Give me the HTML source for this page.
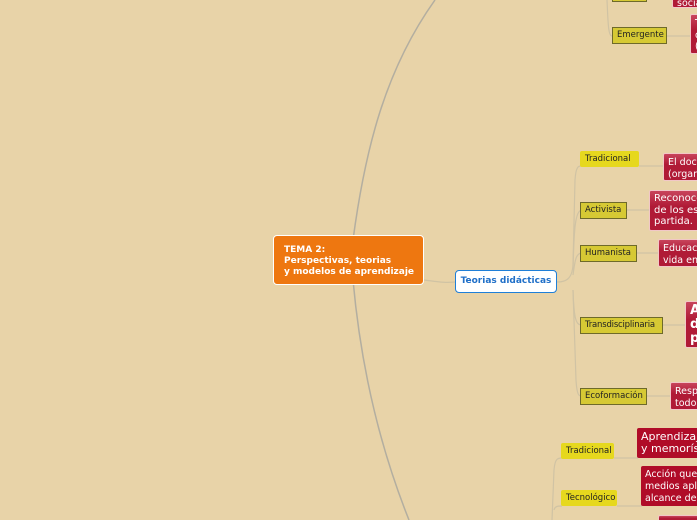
<!DOCTYPE html>
<html><head><meta charset="utf-8"><style>
*{margin:0;padding:0;box-sizing:border-box}
html,body{width:697px;height:520px;overflow:hidden}
body{background:#e8d3a8;font-family:"DejaVu Sans","Liberation Sans",sans-serif;position:relative}
.a{position:absolute;white-space:nowrap}
.y{background:#d6c934;border:1px solid #6e6a2a;font-size:8.5px;color:#222;padding:0 4px;line-height:15px}
.yb{background:#e6d81e;border:none;border-radius:2px;font-size:8.5px;color:#222;padding:0 5px;line-height:16px}
.r{background:linear-gradient(#c8445c,#b01a36 40%);color:#fff;border:1px solid #f2c7c7;border-radius:2px;font-size:9.5px;line-height:11.5px;padding:3px 4px;overflow:hidden}
.d{background:#b00c28;border:none}
</style></head><body>
<svg class="a" style="left:0;top:0" width="697" height="520">
<g fill="none" stroke="#b3aea0" stroke-width="1.5">
<path d="M353 240 C365 150 385 70 435 0"/>
<path d="M353 280 C362 380 385 460 409 520"/>
</g>
<g fill="none" stroke="#d0c3a4" stroke-width="1.2">
<path d="M424 280 C440 282 445 283 455 282"/>
<path d="M557 282 C565 282 572 280 573 265 L575 180 C576 165 579 166 582 166"/>
<path d="M573 270 C574 230 575 210 582 210"/>
<path d="M573 275 C575 260 576 253 582 253"/>
<path d="M573 290 C574 320 576 325 582 325"/>
<path d="M573 290 L576 380 C577 396 579 396 582 396"/>
<path d="M607 0 C608 20 608 36 612 36"/>
<path d="M639 166 L664 166"/><path d="M626 210 L650 210"/><path d="M636 253 L659 253"/>
<path d="M662 325 L686 325"/><path d="M646 396 L671 396"/><path d="M666 36 L690 36"/>
<path d="M614 458 L638 458"/><path d="M617 506 L642 506"/>
<path d="M552 520 L554 470 C555 458 558 458 562 458"/>
<path d="M554 510 C555 506 558 506 562 506"/>
</g></svg>
<div class="a" style="left:273px;top:235px;width:151px;height:50px;background:#ee7710;border:1.5px solid #fff;border-radius:4px;color:#fff;font-weight:bold;font-size:9px;line-height:11px;padding:9px 10px">TEMA 2:<br>Perspectivas, teorias<br>y modelos de aprendizaje</div>
<div class="a" style="left:455px;top:270px;width:102px;height:23px;background:#fff;border:1.5px solid #1f7fd8;border-radius:4px;color:#1f6fc8;font-weight:bold;font-size:9px;line-height:20px;text-align:center">Teorias didácticas</div>
<div class="a y" style="left:612px;top:-12px;width:35px;height:14px"></div>
<div class="a y" style="left:612px;top:27px;width:55px">Emergente</div>
<div class="a yb" style="left:580px;top:151px;width:59px">Tradicional</div>
<div class="a y" style="left:580px;top:202px;width:47px">Activista</div>
<div class="a y" style="left:580px;top:245px;width:57px">Humanista</div>
<div class="a y" style="left:580px;top:317px;width:83px;letter-spacing:-0.2px">Transdisciplinaria</div>
<div class="a y" style="left:580px;top:388px;width:67px">Ecoformación</div>
<div class="a yb" style="left:561px;top:443px;width:53px">Tradicional</div>
<div class="a yb" style="left:561px;top:490px;width:56px">Tecnológico</div>
<div class="a r" style="left:672px;top:-6px;width:40px;height:14px">socia</div>
<div class="a r" style="left:690px;top:14px;width:30px;height:40px">T<br>d<br>(</div>
<div class="a r" style="left:663px;top:153px;width:50px;height:28px">El docente<br>(organ</div>
<div class="a r" style="left:649px;top:190px;width:60px;height:41px;font-size:10px;line-height:11.5px;padding:2px 4px">Reconoce<br>de los es<br>partida.</div>
<div class="a r" style="left:658px;top:239px;width:50px;height:28px">Educaci<br>vida en</div>
<div class="a r" style="left:685px;top:301px;width:30px;height:47px;font-size:13px;font-weight:bold;line-height:14px;padding:2px 4px">A<br>d<br>p</div>
<div class="a r" style="left:670px;top:382px;width:40px;height:28px">Resp<br>todo</div>
<div class="a r d" style="left:637px;top:428px;width:70px;height:30px;font-size:11px;line-height:12px">Aprendizaj<br>y memorís</div>
<div class="a r d" style="left:641px;top:466px;width:65px;height:40px;line-height:12px">Acción que<br>medios apl<br>alcance de</div>
<div class="a r" style="left:658px;top:515px;width:50px;height:5px"></div>
</body></html>
